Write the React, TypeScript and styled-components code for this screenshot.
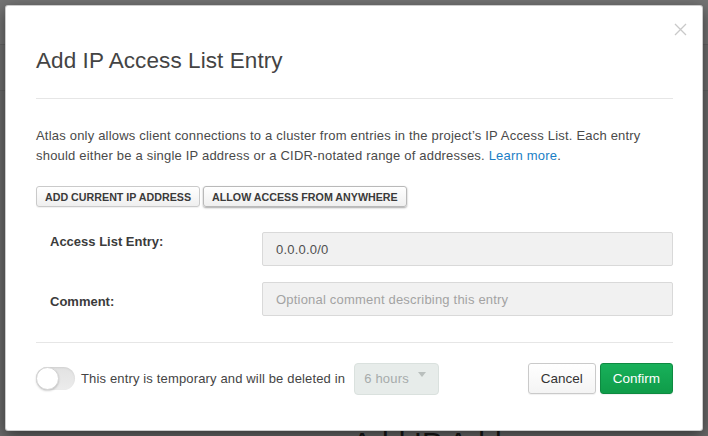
import React from "react";
import styled, { createGlobalStyle } from "styled-components";

const GlobalStyle = createGlobalStyle`
  html, body { margin: 0; padding: 0; }
  body {
    font-family: "Liberation Sans", Arial, Helvetica, sans-serif;
    background: #ebebeb;
    width: 708px;
    height: 436px;
    overflow: hidden;
  }
  * { box-sizing: border-box; }
`;

const Page = styled.div`
  position: relative;
  width: 708px;
  height: 436px;
  overflow: hidden;
  background: #ebebeb;
`;

const TopNav = styled.header`
  height: 45px;
  background: #ffffff;
  border-bottom: 1px solid #dddddd;
`;

const SubNav = styled.div`
  height: 46px;
  background: #f3f3f3;
  border-bottom: 1px solid #dadada;
`;

const PageBody = styled.main`
  padding: 336px 0 0 352px;
`;

const PageHeading = styled.h1`
  margin: 0;
  font-size: 30px;
  line-height: 32px;
  font-weight: 400;
  color: #333;
  white-space: nowrap;
`;

const Backdrop = styled.div`
  position: absolute;
  inset: 0;
  background: rgba(0, 0, 0, 0.545);
`;

const Modal = styled.div`
  position: absolute;
  top: 5px;
  left: 5px;
  width: 698px;
  height: 426px;
  background: #fff;
  border: 1px solid rgba(0, 0, 0, 0.2);
  border-radius: 3px;
  box-shadow: 0 5px 15px rgba(0, 0, 0, 0.5);
  padding: 0 29px 0 30px;
  display: flex;
  flex-direction: column;
`;

const CloseButton = styled.button`
  position: absolute;
  top: 16px;
  right: 15px;
  width: 14px;
  height: 14px;
  padding: 0;
  border: 0;
  background: transparent;
  display: flex;
  align-items: center;
  justify-content: center;
  cursor: pointer;
`;

const Header = styled.div`
  padding: 43px 0 25px;
  border-bottom: 1px solid #e6e6e6;
`;

const Title = styled.h2`
  margin: 0;
  font-size: 22.5px;
  line-height: 24px;
  font-weight: 400;
  letter-spacing: 0.08px;
  color: #444;
`;

const Body = styled.div`
  padding: 27px 0 26px;
  border-bottom: 1px solid #e6e6e6;
`;

const Intro = styled.p`
  margin: 0;
  font-size: 13px;
  line-height: 20px;
  letter-spacing: 0.2px;
  color: #4a4a4a;
`;

const Link = styled.a`
  color: #1a7ec5;
  text-decoration: none;
`;

const QuickActions = styled.div`
  display: flex;
  gap: 3px;
  margin-top: 20px;
`;

const SmallButton = styled.button<{ $raised?: boolean }>`
  height: 21px;
  padding: 0 8px;
  font-family: inherit;
  font-size: 10.7px;
  font-weight: 700;
  text-transform: uppercase;
  color: #3a3a3a;
  background: linear-gradient(#ffffff, #efefef);
  border: 1px solid ${(p) => (p.$raised ? "#b9b9b9" : "#cacaca")};
  border-radius: 3px;
  box-shadow: ${(p) =>
    p.$raised ? "0 1px 2px rgba(0,0,0,0.35)" : "0 1px 1px rgba(0,0,0,0.06)"};
  white-space: nowrap;
`;

const Form = styled.div`
  display: flex;
  flex-direction: column;
  gap: 16px;
  margin-top: 25px;
`;

const FieldRow = styled.div`
  display: grid;
  grid-template-columns: 212px 1fr;
  padding-left: 14px;
`;

const FieldLabel = styled.label<{ $offset?: number }>`
  padding-top: ${(p) => p.$offset ?? 0}px;
  font-size: 13px;
  line-height: 20px;
  font-weight: 700;
  color: #3b3b3b;
`;

const TextInput = styled.input`
  height: 34px;
  width: 100%;
  padding: 0 13px;
  border: 1px solid #d9d9d9;
  border-radius: 2px;
  background: #f1f1f1;
  font-family: inherit;
  font-size: 13px;
  letter-spacing: 0.2px;
  color: #4f4f4f;
  outline: none;
  &::placeholder {
    color: #a3a3a3;
  }
`;

const Footer = styled.div`
  display: flex;
  align-items: center;
  padding: 20px 0 36px;
  height: 87px;
`;

const Toggle = styled.span`
  position: relative;
  width: 39px;
  height: 23px;
  border-radius: 12px;
  background: linear-gradient(#e2e2e2, #ececec);
  box-shadow: inset 0 1px 2px rgba(0, 0, 0, 0.08);
  flex-shrink: 0;
`;

const Knob = styled.span`
  position: absolute;
  top: 0;
  left: 0;
  width: 23px;
  height: 23px;
  border-radius: 50%;
  background: #fff;
  border: 1px solid #d4d4d4;
  box-shadow: 0 1px 2px rgba(0, 0, 0, 0.18);
`;

const ToggleText = styled.span`
  margin-left: 6px;
  font-size: 13px;
  letter-spacing: 0.15px;
  color: #444;
  white-space: nowrap;
`;

const DurationSelect = styled.div`
  margin-left: 9px;
  width: 85px;
  height: 32px;
  display: flex;
  justify-content: space-between;
  align-items: center;
  padding: 0 12px 0 9px;
  background: #e7ecea;
  border: 1px solid #dae1de;
  border-radius: 4px;
  font-size: 13px;
  letter-spacing: 0.2px;
  color: #a6abaa;
`;

const Caret = styled.span`
  align-self: flex-start;
  margin-top: 8px;
  width: 0;
  height: 0;
  border-left: 4px solid transparent;
  border-right: 4px solid transparent;
  border-top: 5px solid #b9bfbd;
`;

const FooterButton = styled.button<{ $primary?: boolean }>`
  height: 31px;
  padding: 0 12px;
  font-family: inherit;
  font-size: 13.5px;
  border-radius: 3px;
  cursor: pointer;
  color: ${(p) => (p.$primary ? "#fff" : "#333")};
  background: ${(p) =>
    p.$primary
      ? "linear-gradient(#18b05a, #0f9c49)"
      : "linear-gradient(#ffffff, #f4f4f4)"};
  border: 1px solid ${(p) => (p.$primary ? "#0e8a41" : "#cacaca")};
  box-shadow: 0 1px 1px rgba(0, 0, 0, 0.06);
  margin-left: ${(p) => (p.$primary ? "4px" : "auto")};
`;

export default function App() {
  return (
    <>
      <GlobalStyle />
      <Page>
        <TopNav />
        <SubNav />
        <PageBody>
          <PageHeading>Add IP Address</PageHeading>
        </PageBody>
        <Backdrop />
        <Modal role="dialog">
          <CloseButton aria-label="Close">
            <svg width="13" height="13" viewBox="0 0 13 13">
              <path
                d="M1 1 L12 12 M12 1 L1 12"
                stroke="#c9c9c9"
                strokeWidth="1.3"
                fill="none"
              />
            </svg>
          </CloseButton>
          <Header>
            <Title>Add IP Access List Entry</Title>
          </Header>
          <Body>
            <Intro>
              Atlas only allows client connections to a cluster from entries in
              the project’s IP Access List. Each entry should either be a single
              IP address or a CIDR-notated range of addresses.{" "}
              <Link href="#">Learn more</Link>.
            </Intro>
            <QuickActions>
              <SmallButton>Add Current IP Address</SmallButton>
              <SmallButton $raised>Allow Access From Anywhere</SmallButton>
            </QuickActions>
            <Form>
              <FieldRow>
                <FieldLabel>Access List Entry:</FieldLabel>
                <TextInput defaultValue="0.0.0.0/0" />
              </FieldRow>
              <FieldRow>
                <FieldLabel $offset={10}>Comment:</FieldLabel>
                <TextInput placeholder="Optional comment describing this entry" />
              </FieldRow>
            </Form>
          </Body>
          <Footer>
            <Toggle>
              <Knob />
            </Toggle>
            <ToggleText>This entry is temporary and will be deleted in</ToggleText>
            <DurationSelect>
              <span>6 hours</span>
              <Caret />
            </DurationSelect>
            <FooterButton>Cancel</FooterButton>
            <FooterButton $primary>Confirm</FooterButton>
          </Footer>
        </Modal>
      </Page>
    </>
  );
}
